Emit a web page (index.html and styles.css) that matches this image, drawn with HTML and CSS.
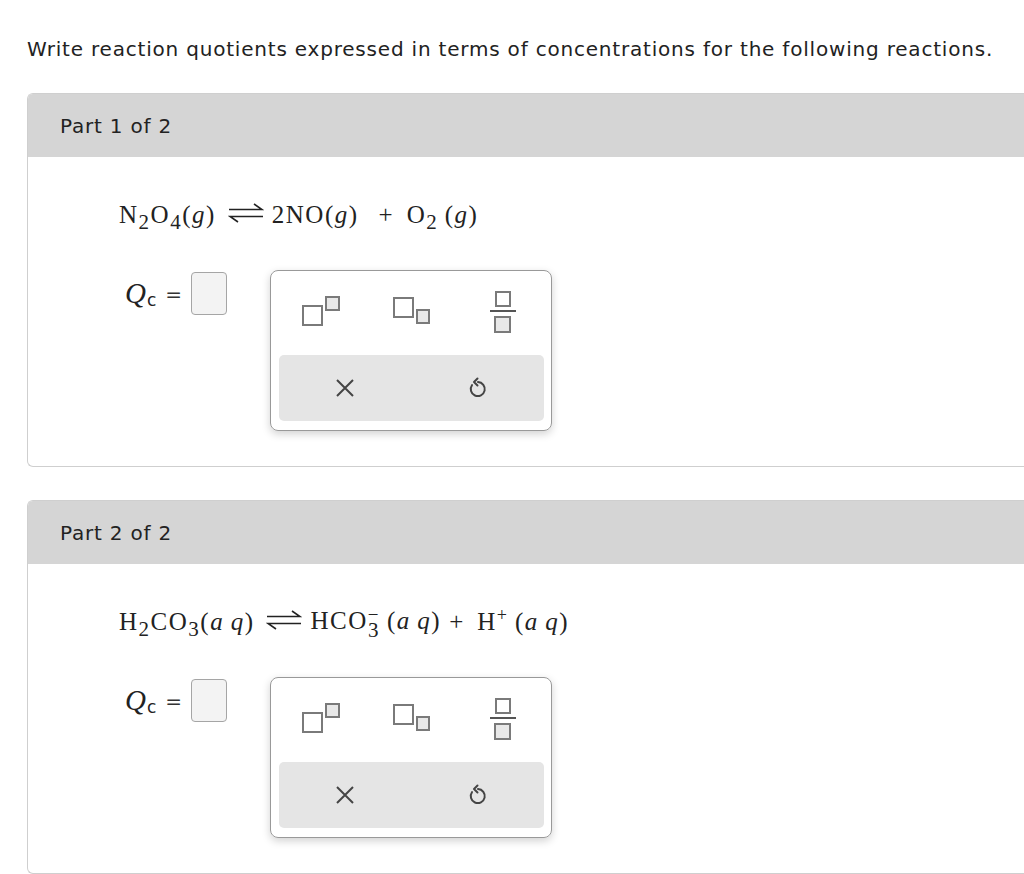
FILE: index.html
```html
<!DOCTYPE html>
<html>
<head>
<meta charset="utf-8">
<link rel="stylesheet" href="styles.css">
</head>
<body>
<div class="page">
  <p class="intro">Write reaction quotients expressed in terms of concentrations for the following reactions.</p>

  <section class="card card-1">
    <div class="card-head">Part 1 of 2</div>
    <div class="card-body">
      <div class="eq">
        <span class="term">N<sub>2</sub>O<sub>4</sub>(<i>g</i>)</span>
        <svg class="eqarrow" width="36" height="22" viewBox="0 0 36 22"><path d="M1 7.5H34L26 2" fill="none" stroke="#222" stroke-width="1.6"/><path d="M35 14.5H2L10 20" fill="none" stroke="#222" stroke-width="1.6"/></svg>
        <span class="term">2NO(<i>g</i>)</span>
        <span class="plus">+</span>
        <span class="term">O<sub>2</sub>&thinsp;(<i>g</i>)</span>
      </div>
      <div class="answer-row">
        <div class="qc"><span class="q">Q</span><span class="c">c</span><span class="eqsign">=</span><span class="slot"></span></div>
        <div class="palette">
          <div class="tools">
            <span class="tool sup"><svg width="40" height="32" viewBox="0 0 40 32"><rect x="2" y="11" width="19" height="19" fill="#fff" stroke="#7a7a7a" stroke-width="2"/><rect x="25" y="2" width="13" height="13" fill="#e8e8e8" stroke="#7a7a7a" stroke-width="2"/></svg></span>
            <span class="tool sub"><svg width="40" height="32" viewBox="0 0 40 32"><rect x="3" y="3" width="19" height="19" fill="#fff" stroke="#7a7a7a" stroke-width="2"/><rect x="26" y="15" width="12" height="13" fill="#e8e8e8" stroke="#7a7a7a" stroke-width="2"/></svg></span>
            <span class="tool frac"><svg width="28" height="44" viewBox="0 0 28 44"><rect x="7" y="2" width="14" height="14" fill="#fff" stroke="#7a7a7a" stroke-width="2"/><path d="M1 21H27" stroke="#555" stroke-width="2"/><rect x="6" y="27" width="15" height="15" fill="#e8e8e8" stroke="#7a7a7a" stroke-width="2"/></svg></span>
          </div>
          <div class="actions">
            <span class="act"><svg width="20" height="20" viewBox="0 0 20 20"><path d="M2 2L18 18M18 2L2 18" stroke="#444" stroke-width="2"/></svg></span>
            <span class="act"><svg width="22" height="24" viewBox="0 0 22 24"><path d="M6.05 9.05A7 7 0 1 0 12 6.07" fill="none" stroke="#444" stroke-width="2" stroke-linecap="round"/><path d="M11.5 2.5L8 6L11.5 9.5" fill="none" stroke="#444" stroke-width="2" stroke-linecap="round" stroke-linejoin="round"/></svg></span>
          </div>
        </div>
      </div>
    </div>
  </section>

  <section class="card card-2">
    <div class="card-head">Part 2 of 2</div>
    <div class="card-body">
      <div class="eq">
        <span class="term">H<sub>2</sub>CO<sub>3</sub>(<i>a</i>&thinsp;<i>q</i>)</span>
        <svg class="eqarrow" width="36" height="22" viewBox="0 0 36 22"><path d="M1 7.5H34L26 2" fill="none" stroke="#222" stroke-width="1.6"/><path d="M35 14.5H2L10 20" fill="none" stroke="#222" stroke-width="1.6"/></svg>
        <span class="term">HCO<span class="ion"><span class="ion-sup">&minus;</span><span class="ion-sub">3</span></span>(<i>a</i>&thinsp;<i>q</i>)</span>
        <span class="plus plus-2">+</span>
        <span class="term">H<sup>+</sup>&thinsp;(<i>a</i>&thinsp;<i>q</i>)</span>
      </div>
      <div class="answer-row">
        <div class="qc"><span class="q">Q</span><span class="c">c</span><span class="eqsign">=</span><span class="slot"></span></div>
        <div class="palette">
          <div class="tools">
            <span class="tool sup"><svg width="40" height="32" viewBox="0 0 40 32"><rect x="2" y="11" width="19" height="19" fill="#fff" stroke="#7a7a7a" stroke-width="2"/><rect x="25" y="2" width="13" height="13" fill="#e8e8e8" stroke="#7a7a7a" stroke-width="2"/></svg></span>
            <span class="tool sub"><svg width="40" height="32" viewBox="0 0 40 32"><rect x="3" y="3" width="19" height="19" fill="#fff" stroke="#7a7a7a" stroke-width="2"/><rect x="26" y="15" width="12" height="13" fill="#e8e8e8" stroke="#7a7a7a" stroke-width="2"/></svg></span>
            <span class="tool frac"><svg width="28" height="44" viewBox="0 0 28 44"><rect x="7" y="2" width="14" height="14" fill="#fff" stroke="#7a7a7a" stroke-width="2"/><path d="M1 21H27" stroke="#555" stroke-width="2"/><rect x="6" y="27" width="15" height="15" fill="#e8e8e8" stroke="#7a7a7a" stroke-width="2"/></svg></span>
          </div>
          <div class="actions">
            <span class="act"><svg width="20" height="20" viewBox="0 0 20 20"><path d="M2 2L18 18M18 2L2 18" stroke="#444" stroke-width="2"/></svg></span>
            <span class="act"><svg width="22" height="24" viewBox="0 0 22 24"><path d="M6.05 9.05A7 7 0 1 0 12 6.07" fill="none" stroke="#444" stroke-width="2" stroke-linecap="round"/><path d="M11.5 2.5L8 6L11.5 9.5" fill="none" stroke="#444" stroke-width="2" stroke-linecap="round" stroke-linejoin="round"/></svg></span>
          </div>
        </div>
      </div>
    </div>
  </section>
</div>
</body>
</html>
```

FILE: styles.css
```css
html, body {
  margin: 0;
  padding: 0;
  background: #fff;
  overflow: hidden;
}
.page {
  width: 1024px;
  box-sizing: border-box;
  padding: 34px 0 0 27px;
  font-family: "DejaVu Sans", Verdana, sans-serif;
  color: #222;
}
.intro {
  margin: 0 0 29px 0;
  font-size: 20px;
  letter-spacing: 0.8px;
  line-height: 30px;
}
.card {
  border: 1px solid #cfcfcf;
  border-right: none;
  border-radius: 6px 0 0 6px;
  margin-bottom: 33px;
  overflow: hidden;
}
.card-head {
  background: #d5d5d5;
  height: 63px;
  display: flex;
  align-items: center;
  padding-left: 32px;
  font-size: 20px;
  letter-spacing: 0.8px;
}
.card-body {
  padding: 38px 0 35px 91px;
}
.eq {
  display: flex;
  align-items: center;
  font-family: "Liberation Serif", "Times New Roman", serif;
  font-size: 25px;
  height: 40px;
  color: #222;
  white-space: nowrap;
}
.term { letter-spacing: 1.5px; }
.eq sub, .eq sup {
  font-size: 21px;
  line-height: 0;
}
.eq sub { vertical-align: -6px; }
.eq sup { vertical-align: 9px; font-size: 18px; }
.eq i { letter-spacing: 1.5px; }
.eq .ion {
  display: inline-block;
  vertical-align: -8px;
  font-size: 21px;
  margin-right: 7px;
  text-align: center;
}
.ion-sup, .ion-sub { display: block; }
.ion-sup { font-size: 19px; line-height: 16px; }
.ion-sub { line-height: 15px; }
.eqarrow { margin: 0 8px 5px 12px; }
.plus { margin: 0 14px 0 20px; }
.plus-2 { margin: 0 14px 0 8px; }
.answer-row {
  display: flex;
  align-items: flex-start;
  margin-top: 35px;
}
.qc {
  display: flex;
  align-items: center;
  padding-left: 6px;
  padding-top: 2px;
}
.q {
  font-family: "Liberation Serif", serif;
  font-style: italic;
  font-size: 29px;
  color: #222;
}
.c {
  font-size: 17px;
  align-self: flex-end;
  margin: 0 9px 5px 1px;
}
.eqsign {
  font-family: "DejaVu Sans", sans-serif;
  font-size: 20px;
  margin-right: 9px;
  color: #333;
}
.slot {
  width: 34px;
  height: 41px;
  border: 1px solid #a5a5a5;
  border-radius: 4px;
  background: #f3f3f3;
}
.palette {
  margin-left: 43px;
  width: 280px;
  height: 159px;
  border: 1px solid #999;
  border-radius: 8px;
  box-shadow: 0 3px 8px rgba(0,0,0,0.18);
  display: flex;
  flex-direction: column;
}
.tools {
  height: 84px;
  display: flex;
  align-items: flex-start;
  padding-left: 30px;
}
.tool { display: flex; }
.tool.sup { margin-top: 24px; }
.tool.sub { margin-top: 24px; margin-left: 50px; }
.tool.frac { margin-top: 19px; margin-left: 58px; }
.actions {
  margin: 0 7px 0 8px;
  height: 66px;
  background: #e5e5e5;
  border-radius: 5px;
  display: flex;
  align-items: center;
  justify-content: space-around;
}
.act { display: flex; }
```
